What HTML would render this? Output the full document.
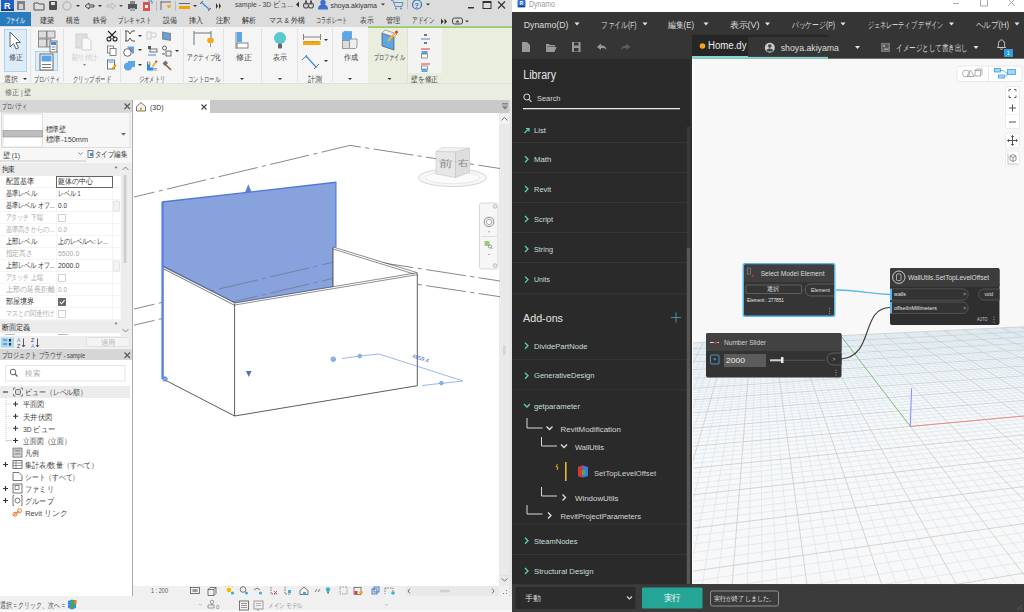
<!DOCTYPE html>
<html><head><meta charset="utf-8">
<style>
html,body{margin:0;padding:0;width:1024px;height:612px;overflow:hidden;background:#fff}
svg{display:block}
text{font-family:"Liberation Sans",sans-serif;white-space:pre}
</style></head><body>
<svg width="1024" height="612" viewBox="0 0 1024 612">
<rect x="0" y="0" width="512" height="612" fill="#f0f0f0"/>
<rect x="0" y="0" width="512" height="27" fill="#dcdcdc"/>
<g>
<rect x="1" y="0" width="13" height="11" fill="#1f5fc8"/><rect x="1" y="9" width="13" height="2" fill="#143f8a"/>
<text x="4" y="9" font-size="9" font-weight="bold" fill="#fff">R</text>
<rect x="17" y="1" width="8" height="9" fill="#7d8288"/><rect x="19" y="4" width="4" height="5" fill="#cfd3d6"/>
<path d="M34 3h4l1 1h5v6h-10z" fill="none" stroke="#555" stroke-width="1"/>
<rect x="49" y="1" width="8" height="9" rx="1" fill="#505050"/><rect x="51" y="2" width="4" height="3" fill="#ddd"/>
<circle cx="67" cy="6" r="4" fill="none" stroke="#bbb" stroke-width="1.5"/>
<path d="M76 5l2 2l2-2z" fill="#333"/>
<path d="M85 6l4-3v2h5v2h-5v2z" fill="none" stroke="#444" stroke-width="1"/>
<path d="M98 5l2 2l2-2z" fill="#333"/>
<path d="M116 6l-4-3v2h-5v2h5v2z" fill="none" stroke="#bbb" stroke-width="1"/>
<path d="M119 5l2 2l2-2z" fill="#555"/>
<rect x="128" y="4" width="9" height="5" fill="#555"/><rect x="130" y="1" width="5" height="3" fill="#888"/><rect x="130" y="8" width="5" height="3" fill="#9ab"/>
<rect x="143" y="2" width="7" height="9" fill="#d9534f"/><rect x="145" y="5" width="3" height="3" fill="#fff"/><path d="M148 1h4v3" stroke="#3a8ee6" fill="none"/>
<rect x="156" y="1" width="1" height="10" fill="#bbb"/>
<path d="M161 1v9M161 2h10" stroke="#666" fill="none"/><path d="M167 5h4l-1 3h-2z" fill="#f5a623"/>
<rect x="175" y="1" width="1" height="10" fill="#bbb"/>
<rect x="179" y="3" width="11" height="1" fill="#666"/><rect x="179" y="6" width="11" height="3" fill="#f0a30a"/>
<path d="M193 5l2 2l2-2z" fill="#333"/>
<path d="M201 2l9 8" stroke="#3a8ee6" stroke-width="1.3"/><path d="M200 4l3-3M208 11l3-3" stroke="#666"/>
<path d="M216 3l2 3l-2 3zM219 3l2 3l-2 3z" fill="#333"/>
<g transform="translate(0,-1.5)"><path d="M299 3v6l-3-3z" fill="#333"/>
<circle cx="306" cy="7" r="2.5" fill="none" stroke="#555" stroke-width="1.2"/><circle cx="311" cy="7" r="2.5" fill="none" stroke="#555" stroke-width="1.2"/><rect x="305" y="2" width="2" height="4" fill="#555"/><rect x="310" y="2" width="2" height="4" fill="#555"/>
<circle cx="323" cy="4" r="2.7" fill="#3c6fd0"/><path d="M318 11c0-4 2-5 5-5s5 1 5 5z" fill="#3c6fd0"/>
<path d="M381 5l2 2l2-2z" fill="#333"/>
<path d="M391 2h2l2 6h7l1-4h-9" fill="none" stroke="#5a8fc0" stroke-width="1"/><circle cx="396" cy="10" r="1" fill="#5a8fc0"/><circle cx="401" cy="10" r="1" fill="#5a8fc0"/>
<rect x="407" y="1" width="1" height="10" fill="#bbb"/>
<circle cx="417" cy="6" r="4.5" fill="none" stroke="#2f6fc0" stroke-width="1.2"/><text x="414.5" y="9" font-size="7" font-weight="bold" fill="#2f6fc0">?</text>
<path d="M426 5l2 2l2-2z" fill="#333"/></g>
<rect x="468" y="7" width="6" height="1.5" fill="#333"/>
<rect x="483" y="1.5" width="8" height="7" fill="none" stroke="#333" stroke-width="1"/><rect x="483" y="1.5" width="8" height="1.5" fill="#333"/>
<path d="M498 1.5l7 7M505 1.5l-7 7" stroke="#333" stroke-width="1.2"/>
</g>
<text x="235" y="6.7" font-size="7.5" fill="#444" textLength="58" lengthAdjust="spacingAndGlyphs">sample - 3D ビュ...</text>
<text x="330.5" y="7.5" font-size="7.5" fill="#333" textLength="46.5" lengthAdjust="spacingAndGlyphs">shoya.akiyama</text>
<rect x="0" y="12" width="31" height="14" fill="#2a7bbd"/>
<text x="5.5" y="22.7" font-size="7.5" fill="#fff" textLength="19.5" lengthAdjust="spacingAndGlyphs">ファイル</text>
<text x="39.5" y="22.7" font-size="7.5" fill="#333" textLength="14.5" lengthAdjust="spacingAndGlyphs">建築</text>
<text x="66" y="22.7" font-size="7.5" fill="#333" textLength="14" lengthAdjust="spacingAndGlyphs">構造</text>
<text x="92.5" y="22.7" font-size="7.5" fill="#333" textLength="14.0" lengthAdjust="spacingAndGlyphs">鉄骨</text>
<text x="118" y="22.7" font-size="7.5" fill="#333" textLength="33" lengthAdjust="spacingAndGlyphs">プレキャスト</text>
<text x="163" y="22.7" font-size="7.5" fill="#333" textLength="14" lengthAdjust="spacingAndGlyphs">設備</text>
<text x="189" y="22.7" font-size="7.5" fill="#333" textLength="14" lengthAdjust="spacingAndGlyphs">挿入</text>
<text x="215.5" y="22.7" font-size="7.5" fill="#333" textLength="14.5" lengthAdjust="spacingAndGlyphs">注釈</text>
<text x="242" y="22.7" font-size="7.5" fill="#333" textLength="14" lengthAdjust="spacingAndGlyphs">解析</text>
<text x="268.5" y="22.7" font-size="7.5" fill="#333" textLength="36.5" lengthAdjust="spacingAndGlyphs">マス &amp; 外構</text>
<text x="316" y="22.7" font-size="7.5" fill="#333" textLength="31" lengthAdjust="spacingAndGlyphs">コラボレート</text>
<text x="360" y="22.7" font-size="7.5" fill="#333" textLength="13.5" lengthAdjust="spacingAndGlyphs">表示</text>
<text x="386" y="22.7" font-size="7.5" fill="#333" textLength="14.5" lengthAdjust="spacingAndGlyphs">管理</text>
<text x="412" y="22.7" font-size="7.5" fill="#333" textLength="22" lengthAdjust="spacingAndGlyphs">アドイン</text>
<g transform="translate(440,16.5)">
<path d="M1 2l2.5 3l-2.5 3zM4.5 2l2.5 3l-2.5 3z" fill="#333"/>
<rect x="12.5" y="1.5" width="10" height="6" rx="2" fill="none" stroke="#444" stroke-width="1"/><path d="M15.5 6l2-2.5l2 2.5z" fill="#444"/>
<path d="M25 4l2 2l2-2z" fill="#444"/></g>
<rect x="0" y="27" width="512" height="56" fill="#f5f5f5"/>
<rect x="368" y="26.3" width="144" height="1.6" fill="#92c65e"/>
<rect x="368" y="28" width="144" height="55" fill="#e9eedf"/>
<rect x="408" y="28" width="34" height="45" fill="#f3f3f1"/>
<rect x="0" y="83" width="512" height="1" fill="#dfe3d6"/>
<rect x="30" y="29" width="1" height="53" fill="#e2e2e2"/>
<rect x="63" y="29" width="1" height="53" fill="#e2e2e2"/>
<rect x="120" y="29" width="1" height="53" fill="#e2e2e2"/>
<rect x="183" y="29" width="1" height="53" fill="#e2e2e2"/>
<rect x="223" y="29" width="1" height="53" fill="#e2e2e2"/>
<rect x="261" y="29" width="1" height="53" fill="#e2e2e2"/>
<rect x="297" y="29" width="1" height="53" fill="#e2e2e2"/>
<rect x="332" y="29" width="1" height="53" fill="#e2e2e2"/>
<rect x="407" y="29" width="1" height="53" fill="#dde2d3"/>
<rect x="4.5" y="29.5" width="22" height="42" fill="#dcecf8" stroke="#a9d5f2" stroke-width="1"/>
<rect x="35.5" y="51.5" width="22" height="19" fill="#dcecf8" stroke="#a9d5f2" stroke-width="1"/>
<g transform="translate(0,27)">
<path d="M10 5v15l3.5-3.5l2.5 5.5l2.5-1l-2.5-5.5h4.5z" fill="#fff" stroke="#555" stroke-width="0.9"/>
<rect x="38.5" y="4" width="8" height="7" fill="#ddd" stroke="#777" stroke-width=".8"/><rect x="47" y="4" width="8" height="7" fill="#ddd" stroke="#777" stroke-width=".8"/>
<rect x="38.5" y="12" width="8" height="8" fill="#ddd" stroke="#777" stroke-width=".8"/><rect x="47" y="12" width="4" height="8" fill="#ddd" stroke="#777" stroke-width=".8"/>
<rect x="50" y="14" width="7" height="11" fill="#fff" stroke="#555" stroke-width=".8"/><rect x="51" y="15" width="5" height="3" fill="#3a8ee6"/><path d="M51.5 20h4M51.5 22.5h4" stroke="#555" stroke-width=".7"/>
<rect x="40" y="27" width="13" height="16" fill="#fff" stroke="#555" stroke-width=".9"/><rect x="41.5" y="28.5" width="10" height="6" fill="#5aa6e8"/><path d="M42 37.5h9M42 40.5h9" stroke="#555" stroke-width=".8"/>
<rect x="76" y="7" width="11" height="14" fill="#e0e0e0" stroke="#d0d0d0"/><path d="M82 11h6l3 3v9h-9z" fill="#fafafa" stroke="#cfcfcf"/>
<path d="M83 37l1.5 2l1.5-2z" fill="#888"/>
<circle cx="109" cy="12" r="2" fill="none" stroke="#222" stroke-width="1.1"/><circle cx="115" cy="12" r="2" fill="none" stroke="#222" stroke-width="1.1"/><path d="M108 4l7 7M116 4l-7 7" stroke="#222" stroke-width="1.1"/>
<rect x="107.5" y="19" width="6" height="7" fill="#fff" stroke="#666" stroke-width=".8"/><rect x="110" y="21.5" width="6" height="7" fill="#fff" stroke="#666" stroke-width=".8"/>
<rect x="107.5" y="33" width="7" height="9" fill="#fff" stroke="#555" stroke-width=".8"/><path d="M108.5 35h5" stroke="#3a8ee6"/><path d="M112 42l4-4" stroke="#f0a30a" stroke-width="2"/>
<path d="M125 4h3l2 3l2-3h3M125 14h3l2-3l2 3h3M126 4v10" stroke="#555" fill="none" stroke-width="1"/>
<path d="M138 8l2 2l2-2z" fill="#333"/>
<rect x="147" y="5" width="4" height="7" fill="none" stroke="#ccc"/><path d="M151 6h5v4h-5" fill="none" stroke="#ccc"/>
<path d="M162 4.5l9 1.5v8l-9-1.5z" fill="#8a8a8a"/><path d="M163.3 6.3l6.4 1v5l-6.4-1z" fill="#5aa6e8"/>
<circle cx="127.5" cy="25.5" r="3.8" fill="#fff" stroke="#555" stroke-width=".9"/><path d="M127 19.5h7v7h-2" fill="#5aa6e8"/><path d="M129 21.5a4 4 0 0 1 2.5 3" stroke="#d33" fill="none"/>
<path d="M138 22l2 2l2-2z" fill="#333"/>
<rect x="148" y="19" width="3" height="3" fill="#555"/><rect x="150" y="22" width="7" height="3" fill="none" stroke="#555" stroke-width=".8"/><path d="M148 28h8" stroke="#3a8ee6"/>
<circle cx="164.5" cy="21" r="2" fill="none" stroke="#555" stroke-width=".9"/><rect x="166" y="24" width="5" height="5" fill="#eee" stroke="#555" stroke-width=".8"/><path d="M162 27h3" stroke="#555"/>
<path d="M175 23l2 2l2-2z" fill="#333"/>
<circle cx="128" cy="39.5" r="4" fill="#5aa6e8"/><rect x="128" y="34" width="7" height="6" fill="#5aa6e8"/>
<path d="M138 37l2 2l2-2z" fill="#333"/>
<path d="M147 34.5h1.2v7h-1.2zM149.5 34.5h0.8v4h-0.8z" fill="#777"/><path d="M147 37.5h3v3h3.5v3h-6.5z" fill="#2f8ae6"/><path d="M152.5 39.5l3.5-4.5" stroke="#f0b53a" stroke-width="2"/><circle cx="156.3" cy="34.6" r="1.1" fill="#e33"/><path d="M154 41.5h3M154 43h3" stroke="#666" stroke-width=".6"/>
<path d="M165.5 37.5l5.5 5.5" stroke="#8a5a4a" stroke-width="1.6"/><path d="M162.5 36.5l3-3l2.5 2.5l-3 3z" fill="#707070"/>
<path d="M194 4v14M211 4v9M194 6h17" stroke="#666" fill="none" stroke-width=".9"/><path d="M207 13h7l-1 3h-5z" fill="#f5a623"/><rect x="207.5" y="11" width="6" height="2" fill="#f5a623"/><path d="M210.5 16v4" stroke="#999"/>
<rect x="235.5" y="5" width="1" height="17" fill="#888"/><rect x="237" y="5" width="5" height="10" fill="#5aa6e8"/><rect x="237" y="16" width="11" height="5" fill="#fff" stroke="#666" stroke-width=".8"/>
<circle cx="280" cy="11" r="6" fill="#5bc7d0"/><rect x="278" y="16.5" width="4" height="5" rx="1" fill="#666"/>
<path d="M303.5 7v6M320.5 7v6M304 10h16" stroke="#666" stroke-width=".8"/><rect x="303" y="14" width="17.5" height="4" fill="#f5a814"/><path d="M305 14v1.5M307.5 14v1.5M310 14v1.5M312.5 14v1.5M315 14v1.5M317.5 14v1.5" stroke="#a86a00" stroke-width=".5"/>
<path d="M324 12l2 2l2-2z" fill="#333"/>
<path d="M302 33l5-5M314 42l5-5" stroke="#555" stroke-width=".8"/><path d="M306 29l10 11" stroke="#3a8ee6" stroke-width="1.2"/><circle cx="306" cy="29.5" r="1" fill="#3a8ee6"/><circle cx="316" cy="40" r="1" fill="#3a8ee6"/>
<path d="M324 33l2 2l2-2z" fill="#333"/>
<path d="M342.5 6l1.5-1.5h7.5v7.5l-1.5 1.5h-7.5z" fill="#5aa6e8" stroke="#3a86c8" stroke-width=".5"/><rect x="342.5" y="13.5" width="7" height="8" fill="#ddd" stroke="#888" stroke-width=".8"/><path d="M349.5 13.5l1.5-1.5h6v8l-1.5 1.5h-6z" fill="#eee" stroke="#888" stroke-width=".8"/>
<path d="M382 6l12 4v13l-12-4z" fill="#5aa6e8" stroke="#555" stroke-width=".7"/><path d="M382 6l3-3l12 4l-3 3z" fill="#eee" stroke="#777" stroke-width=".6"/><path d="M388 14l7-8" stroke="#f0b53a" stroke-width="2"/><circle cx="396.5" cy="5" r="1.5" fill="#e33"/>
<rect x="424" y="7" width="3" height="2" fill="#777"/><path d="M421 12h9" stroke="#3a8ee6"/><rect x="424" y="15" width="3" height="2" fill="#777"/>
<path d="M421 22h9" stroke="#e34" stroke-width="1"/><rect x="421.5" y="24" width="6" height="3" fill="#5aa6e8"/><rect x="421.5" y="27" width="6" height="4" fill="#fff" stroke="#555" stroke-width=".6"/>
<path d="M421 37h9" stroke="#e34" stroke-width="1"/><rect x="421.5" y="39" width="6" height="3" fill="#fff" stroke="#555" stroke-width=".6"/><rect x="421.5" y="42" width="6" height="3" fill="#5aa6e8"/>
<path d="M23 51l2 2l2-2z" fill="#333"/>
<path d="M240 51l2 2l2-2z" fill="#333"/>
<path d="M278 51l2 2l2-2z" fill="#333"/>
<path d="M348 51l2 2l2-2z" fill="#333"/>
<path d="M387.5 51l2 2l2-2z" fill="#333"/>
</g>
<text x="8.5" y="60.2" font-size="7.5" fill="#444" textLength="14.0" lengthAdjust="spacingAndGlyphs">修正</text>
<text x="72" y="60.2" font-size="7.5" fill="#c8c8c8" textLength="25" lengthAdjust="spacingAndGlyphs">貼り付け</text>
<text x="187" y="60.2" font-size="7.5" fill="#444" textLength="34" lengthAdjust="spacingAndGlyphs">アクティブ化</text>
<text x="236" y="60.2" font-size="7.5" fill="#444" textLength="16" lengthAdjust="spacingAndGlyphs">修正</text>
<text x="272.8" y="60.2" font-size="7.5" fill="#444" textLength="14.0" lengthAdjust="spacingAndGlyphs">表示</text>
<text x="344" y="60.2" font-size="7.5" fill="#444" textLength="14" lengthAdjust="spacingAndGlyphs">作成</text>
<text x="373.5" y="60.2" font-size="7.5" fill="#444" textLength="31.2" lengthAdjust="spacingAndGlyphs">プロファイル</text>
<text x="4" y="82.2" font-size="7.5" fill="#444" textLength="14" lengthAdjust="spacingAndGlyphs">選択</text>
<text x="34" y="82.2" font-size="7.5" fill="#444" textLength="26" lengthAdjust="spacingAndGlyphs">プロパティ</text>
<text x="73" y="82.2" font-size="7.5" fill="#444" textLength="38" lengthAdjust="spacingAndGlyphs">クリップボード</text>
<text x="139" y="82.2" font-size="7.5" fill="#444" textLength="26" lengthAdjust="spacingAndGlyphs">ジオメトリ</text>
<text x="188" y="82.2" font-size="7.5" fill="#444" textLength="32" lengthAdjust="spacingAndGlyphs">コントロール</text>
<text x="308" y="82.2" font-size="7.5" fill="#444" textLength="14" lengthAdjust="spacingAndGlyphs">計測</text>
<text x="411" y="82.2" font-size="7.5" fill="#444" textLength="27" lengthAdjust="spacingAndGlyphs">壁を修正</text>
<rect x="0" y="84" width="512" height="16" fill="#eaeee2"/>
<text x="5" y="95.2" font-size="7.5" fill="#666" textLength="26.5" lengthAdjust="spacingAndGlyphs">修正 | 壁</text>
<rect x="0" y="100" width="132" height="12" fill="#d6d6d6"/>
<text x="1.5" y="109.2" font-size="7.5" fill="#444" textLength="25.5" lengthAdjust="spacingAndGlyphs">プロパティ</text>
<path d="M124.5 103.5l5.5 5.5M130 103.5l-5.5 5.5" stroke="#555" stroke-width="1.1"/>
<rect x="0" y="112" width="132" height="238" fill="#f7f7f7"/>
<rect x="1.5" y="112.5" width="128.5" height="35" fill="#f7f7f7" stroke="#dcdcdc" stroke-width="1"/>
<rect x="3" y="114" width="39.5" height="33" fill="#ffffff" stroke="#d8d8d8" stroke-width="0.8"/>
<rect x="3" y="130.5" width="39.5" height="6.5" fill="#bdbdbd" stroke="#8f8f8f" stroke-width="0.6"/>
<text x="45.5" y="132.0" font-size="7.5" fill="#444" textLength="20.5" lengthAdjust="spacingAndGlyphs">標準壁</text>
<text x="45.5" y="142.0" font-size="7.5" fill="#444" textLength="42.5" lengthAdjust="spacingAndGlyphs">標準-150mm</text>
<path d="M121 133l2.5 2.5l2.5-2.5z" fill="#666"/>
<text x="2.5" y="157.5" font-size="7.5" fill="#444" textLength="17.5" lengthAdjust="spacingAndGlyphs">壁 (1)</text>
<path d="M78.5 152.5l2 2l2-2" stroke="#777" fill="none" stroke-width=".9"/>
<rect x="0" y="160.5" width="86" height="1" fill="#c8c8c8"/>
<rect x="88" y="150.5" width="5" height="7" fill="none" stroke="#666" stroke-width=".8"/><rect x="90" y="153" width="3" height="3" fill="#3a8ee6"/>
<text x="94.5" y="156.9" font-size="7.5" fill="#444" textLength="32.5" lengthAdjust="spacingAndGlyphs">タイプ編集</text>
<rect x="120.5" y="163" width="11.5" height="173" fill="#ededed"/>
<path d="M122.5 170l3-3l3 3" stroke="#777" fill="none" stroke-width=".9"/>
<rect x="123.5" y="175" width="3" height="88" fill="#cfcfcf"/>
<path d="M122.5 329l3 3l3-3" stroke="#777" fill="none" stroke-width=".9"/>
<rect x="0" y="163" width="120.5" height="13" fill="#ececec"/>
<text x="1.5" y="172.3" font-size="7.5" fill="#333" textLength="13.5" lengthAdjust="spacingAndGlyphs">拘束</text>
<text x="114.5" y="171.02" font-size="7" fill="#555">*</text>
<rect x="0" y="176" width="120.5" height="12" fill="#ffffff"/>
<rect x="0" y="187.5" width="120.5" height="0.6" fill="#ececec"/>
<rect x="56.5" y="176" width="0.6" height="12" fill="#ececec"/>
<rect x="112.5" y="176" width="0.6" height="12" fill="#ececec"/>
<text x="5.5" y="184.1" font-size="7.5" fill="#333333" textLength="28.25" lengthAdjust="spacingAndGlyphs">配置基準</text>
<text x="58" y="184.1" font-size="7.5" fill="#333333" textLength="34.5" lengthAdjust="spacingAndGlyphs">躯体の中心</text>
<rect x="56.5" y="176.5" width="56" height="11" fill="none" stroke="#555" stroke-width="0.9"/>
<rect x="0" y="188" width="120.5" height="12" fill="#ffffff"/>
<rect x="0" y="199.5" width="120.5" height="0.6" fill="#ececec"/>
<rect x="56.5" y="188" width="0.6" height="12" fill="#ececec"/>
<rect x="112.5" y="188" width="0.6" height="12" fill="#ececec"/>
<text x="5.5" y="196.1" font-size="7.5" fill="#333333" textLength="31.25" lengthAdjust="spacingAndGlyphs">基準レベル</text>
<text x="58" y="196.1" font-size="7.5" fill="#333333" textLength="22.5" lengthAdjust="spacingAndGlyphs">レベル 1</text>
<rect x="0" y="200" width="120.5" height="12" fill="#ffffff"/>
<rect x="0" y="211.5" width="120.5" height="0.6" fill="#ececec"/>
<rect x="56.5" y="200" width="0.6" height="12" fill="#ececec"/>
<rect x="112.5" y="200" width="0.6" height="12" fill="#ececec"/>
<text x="5.5" y="208.1" font-size="7.5" fill="#333333" textLength="49.0" lengthAdjust="spacingAndGlyphs">基準レベル オフ...</text>
<text x="58" y="208.1" font-size="7.5" fill="#333333" textLength="9" lengthAdjust="spacingAndGlyphs">0.0</text>
<rect x="113.5" y="201" width="6" height="10" fill="#f4f4f4" stroke="#d8d8d8" stroke-width="0.7" rx="1"/>
<rect x="0" y="212" width="120.5" height="12" fill="#ffffff"/>
<rect x="0" y="223.5" width="120.5" height="0.6" fill="#ececec"/>
<rect x="56.5" y="212" width="0.6" height="12" fill="#ececec"/>
<rect x="112.5" y="212" width="0.6" height="12" fill="#ececec"/>
<text x="5.5" y="220.1" font-size="7.5" fill="#aaaaaa" textLength="37.5" lengthAdjust="spacingAndGlyphs">アタッチ 下端</text>
<rect x="58.5" y="214.5" width="7" height="7" fill="#fff" stroke="#c8c8c8" stroke-width="0.8"/>
<rect x="0" y="224" width="120.5" height="12" fill="#ffffff"/>
<rect x="0" y="235.5" width="120.5" height="0.6" fill="#ececec"/>
<rect x="56.5" y="224" width="0.6" height="12" fill="#ececec"/>
<rect x="112.5" y="224" width="0.6" height="12" fill="#ececec"/>
<text x="5.5" y="232.1" font-size="7.5" fill="#aaaaaa" textLength="49.0" lengthAdjust="spacingAndGlyphs">基準高さからの...</text>
<text x="58" y="232.1" font-size="7.5" fill="#aaaaaa" textLength="9" lengthAdjust="spacingAndGlyphs">0.0</text>
<rect x="0" y="236" width="120.5" height="12" fill="#ffffff"/>
<rect x="0" y="247.5" width="120.5" height="0.6" fill="#ececec"/>
<rect x="56.5" y="236" width="0.6" height="12" fill="#ececec"/>
<rect x="112.5" y="236" width="0.6" height="12" fill="#ececec"/>
<text x="5.5" y="244.1" font-size="7.5" fill="#333333" textLength="31.25" lengthAdjust="spacingAndGlyphs">上部レベル</text>
<text x="58" y="244.1" font-size="7.5" fill="#333333" textLength="50" lengthAdjust="spacingAndGlyphs">上のレベルへ: レ...</text>
<rect x="0" y="248" width="120.5" height="12" fill="#ffffff"/>
<rect x="0" y="259.5" width="120.5" height="0.6" fill="#ececec"/>
<rect x="56.5" y="248" width="0.6" height="12" fill="#ececec"/>
<rect x="112.5" y="248" width="0.6" height="12" fill="#ececec"/>
<text x="5.5" y="256.1" font-size="7.5" fill="#aaaaaa" textLength="27.0" lengthAdjust="spacingAndGlyphs">指定高さ</text>
<text x="58" y="256.1" font-size="7.5" fill="#aaaaaa" textLength="21.25" lengthAdjust="spacingAndGlyphs">5500.0</text>
<rect x="0" y="260" width="120.5" height="12" fill="#ffffff"/>
<rect x="0" y="271.5" width="120.5" height="0.6" fill="#ececec"/>
<rect x="56.5" y="260" width="0.6" height="12" fill="#ececec"/>
<rect x="112.5" y="260" width="0.6" height="12" fill="#ececec"/>
<text x="5.5" y="268.1" font-size="7.5" fill="#333333" textLength="49.0" lengthAdjust="spacingAndGlyphs">上部レベル オフ...</text>
<text x="58" y="268.1" font-size="7.5" fill="#333333" textLength="21.25" lengthAdjust="spacingAndGlyphs">2000.0</text>
<rect x="113.5" y="261" width="6" height="10" fill="#f4f4f4" stroke="#d8d8d8" stroke-width="0.7" rx="1"/>
<rect x="0" y="272" width="120.5" height="12" fill="#ffffff"/>
<rect x="0" y="283.5" width="120.5" height="0.6" fill="#ececec"/>
<rect x="56.5" y="272" width="0.6" height="12" fill="#ececec"/>
<rect x="112.5" y="272" width="0.6" height="12" fill="#ececec"/>
<text x="5.5" y="280.1" font-size="7.5" fill="#aaaaaa" textLength="37.5" lengthAdjust="spacingAndGlyphs">アタッチ 上端</text>
<rect x="58.5" y="274.5" width="7" height="7" fill="#fff" stroke="#c8c8c8" stroke-width="0.8"/>
<rect x="0" y="284" width="120.5" height="12" fill="#ffffff"/>
<rect x="0" y="295.5" width="120.5" height="0.6" fill="#ececec"/>
<rect x="56.5" y="284" width="0.6" height="12" fill="#ececec"/>
<rect x="112.5" y="284" width="0.6" height="12" fill="#ececec"/>
<text x="5.5" y="292.1" font-size="7.5" fill="#aaaaaa" textLength="49.0" lengthAdjust="spacingAndGlyphs">上部の延長距離</text>
<text x="58" y="292.1" font-size="7.5" fill="#aaaaaa" textLength="9" lengthAdjust="spacingAndGlyphs">0.0</text>
<rect x="0" y="296" width="120.5" height="12" fill="#ffffff"/>
<rect x="0" y="307.5" width="120.5" height="0.6" fill="#ececec"/>
<rect x="56.5" y="296" width="0.6" height="12" fill="#ececec"/>
<rect x="112.5" y="296" width="0.6" height="12" fill="#ececec"/>
<text x="5.5" y="304.1" font-size="7.5" fill="#333333" textLength="28.25" lengthAdjust="spacingAndGlyphs">部屋境界</text>
<rect x="58.5" y="298.5" width="7" height="7" fill="#666" stroke="#555" stroke-width="0.8"/>
<path d="M59.8 302l1.8 1.8l3-3.6" stroke="#fff" fill="none" stroke-width="1.1"/>
<rect x="0" y="308" width="120.5" height="12" fill="#ffffff"/>
<rect x="0" y="319.5" width="120.5" height="0.6" fill="#ececec"/>
<rect x="56.5" y="308" width="0.6" height="12" fill="#ececec"/>
<rect x="112.5" y="308" width="0.6" height="12" fill="#ececec"/>
<text x="5.5" y="316.1" font-size="7.5" fill="#aaaaaa" textLength="49.0" lengthAdjust="spacingAndGlyphs">マスとの関連付け</text>
<rect x="58.5" y="310.5" width="7" height="7" fill="#fff" stroke="#c8c8c8" stroke-width="0.8"/>
<rect x="0" y="320.5" width="120.5" height="12.5" fill="#ececec"/>
<text x="1.5" y="330.0" font-size="7.5" fill="#333" textLength="28.5" lengthAdjust="spacingAndGlyphs">断面定義</text>
<text x="114.5" y="327.02" font-size="7" fill="#555">*</text>
<rect x="0" y="333" width="120.5" height="3" fill="#fff"/>
<rect x="5" y="334" width="10" height="1" fill="#bbb"/>
<rect x="58" y="334" width="10" height="1" fill="#bbb"/>
<rect x="0" y="336" width="132" height="12.5" fill="#eeeeee"/>
<rect x="1" y="337.5" width="13" height="10" fill="#a6d8f2"/>
<path d="M3 340h4M3 344h4" stroke="#2a6fa8" stroke-width="1"/><rect x="9" y="339" width="2" height="2.5" fill="#333"/><rect x="9" y="343" width="2" height="2.5" fill="#333"/>
<text x="17" y="342" font-size="5" fill="#3a8ee6">A</text><text x="17" y="347.5" font-size="5" fill="#333">Z</text><path d="M23.5 338.5v8M22 345l1.5 2l1.5-2" stroke="#333" fill="none" stroke-width=".8"/>
<text x="31" y="342" font-size="5" fill="#333">Z</text><text x="31" y="347.5" font-size="5" fill="#3a8ee6">A</text><path d="M37.5 338.5v8M36 345l1.5 2l1.5-2" stroke="#333" fill="none" stroke-width=".8"/>
<rect x="86.5" y="337.5" width="43" height="9" fill="#f3f3f3" stroke="#dddddd" stroke-width="0.8" rx="1"/>
<text x="100.5" y="344.52" font-size="7" fill="#b5b5b5" textLength="14.5" lengthAdjust="spacingAndGlyphs">適用</text>
<rect x="132" y="100" width="1" height="496" fill="#a9a9a9"/>
<rect x="0" y="349" width="132" height="11" fill="#d6d6d6"/>
<text x="1.5" y="357.7" font-size="7.5" fill="#444" textLength="83.5" lengthAdjust="spacingAndGlyphs">プロジェクト ブラウザ - sample</text>
<path d="M124.5 352.5l5.5 5.5M130 352.5l-5.5 5.5" stroke="#555" stroke-width="1.1"/>
<rect x="0" y="360" width="132" height="236" fill="#ffffff"/>
<rect x="5.5" y="365.5" width="119.5" height="15.5" fill="#fff" stroke="#dedede" stroke-width="0.8"/>
<circle cx="13" cy="372" r="2.8" fill="none" stroke="#666" stroke-width="1"/><path d="M15 374l2.5 2.5" stroke="#666" stroke-width="1.2"/>
<text x="25" y="375.7" font-size="7.5" fill="#b0b0b0" textLength="15" lengthAdjust="spacingAndGlyphs">検索</text>
<rect x="0" y="386" width="130" height="12" fill="#ececec"/>
<path d="M3 392h5" stroke="#333" stroke-width="1.1"/>
<path d="M13.5 390v-2h2M20.5 388h2v2M22.5 394v2h-2M15.5 396h-2v-2" stroke="#666" fill="none" stroke-width=".8"/><rect x="15.5" y="389.5" width="5" height="5" rx="1.2" fill="#ddd" stroke="#555" stroke-width=".8"/>
<text x="25.2" y="395.3" font-size="7.5" fill="#444" textLength="61.8" lengthAdjust="spacingAndGlyphs">ビュー（レベル順）</text>
<path d="M6 398v43h6" stroke="#aaa" stroke-width=".6" stroke-dasharray="1 1" fill="none"/>
<path d="M6 404h6" stroke="#aaa" stroke-width=".6" stroke-dasharray="1 1"/>
<path d="M13 404h5M15.5 401.5v5" stroke="#333" stroke-width="1.1"/>
<text x="23" y="407.3" font-size="7.5" fill="#444" textLength="21.5" lengthAdjust="spacingAndGlyphs">平面図</text>
<path d="M6 416.2h6" stroke="#aaa" stroke-width=".6" stroke-dasharray="1 1"/>
<path d="M13 416.2h5M15.5 413.7v5" stroke="#333" stroke-width="1.1"/>
<text x="23" y="419.5" font-size="7.5" fill="#444" textLength="29" lengthAdjust="spacingAndGlyphs">天井伏図</text>
<path d="M6 428.2h6" stroke="#aaa" stroke-width=".6" stroke-dasharray="1 1"/>
<path d="M13 428.2h5M15.5 425.7v5" stroke="#333" stroke-width="1.1"/>
<text x="23" y="431.5" font-size="7.5" fill="#444" textLength="32" lengthAdjust="spacingAndGlyphs">3D ビュー</text>
<path d="M6 440.5h6" stroke="#aaa" stroke-width=".6" stroke-dasharray="1 1"/>
<path d="M13 440.5h5M15.5 438.0v5" stroke="#333" stroke-width="1.1"/>
<text x="23" y="443.8" font-size="7.5" fill="#444" textLength="48" lengthAdjust="spacingAndGlyphs">立面図（立面）</text>
<rect x="13" y="448.1" width="9" height="9" fill="#ddd" stroke="#666" stroke-width=".8"/><rect x="14.5" y="449.6" width="6" height="2" fill="#999"/><rect x="14.5" y="452.6" width="6" height="2.5" fill="#aaa"/>
<text x="25.2" y="455.9" font-size="7.5" fill="#444" textLength="13.7" lengthAdjust="spacingAndGlyphs">凡例</text>
<path d="M3 464.5h5M5.5 462.0v5" stroke="#333" stroke-width="1.1"/>
<rect x="13" y="460.5" width="9" height="8" fill="#fff" stroke="#555" stroke-width=".8"/><path d="M13 463.0h9M13 465.5h9M16 460.5v8" stroke="#555" stroke-width=".6"/>
<text x="25.2" y="467.8" font-size="7.5" fill="#444" textLength="73.2" lengthAdjust="spacingAndGlyphs">集計表/数量（すべて）</text>
<path d="M13 472.5h6l3 3v5h-9z" fill="#fff" stroke="#555" stroke-width=".8"/>
<text x="25.2" y="479.8" font-size="7.5" fill="#444" textLength="53.8" lengthAdjust="spacingAndGlyphs">シート（すべて）</text>
<path d="M3 488.5h5M5.5 486.0v5" stroke="#333" stroke-width="1.1"/>
<rect x="13" y="484.0" width="9" height="9" fill="#fff" stroke="#555" stroke-width=".8"/><rect x="15" y="485.5" width="4" height="4" fill="none" stroke="#555" stroke-width=".7"/>
<text x="25.2" y="491.8" font-size="7.5" fill="#444" textLength="28.6" lengthAdjust="spacingAndGlyphs">ファミリ</text>
<path d="M3 500.5h5M5.5 498.0v5" stroke="#333" stroke-width="1.1"/>
<path d="M14 495.5h-1v10h1M21 495.5h1v10h-1" stroke="#555" fill="none" stroke-width=".8"/><circle cx="17.5" cy="500.5" r="2.5" fill="none" stroke="#555" stroke-width=".8"/>
<text x="25.2" y="503.8" font-size="7.5" fill="#444" textLength="28.6" lengthAdjust="spacingAndGlyphs">グループ</text>
<path d="M13.5 515.7l3-3M16.5 513.7l3-3" stroke="#f07a3a" stroke-width="1.2"/><circle cx="15" cy="514.2" r="2" fill="none" stroke="#f07a3a" stroke-width="1"/><circle cx="19.5" cy="510.70000000000005" r="2" fill="none" stroke="#f07a3a" stroke-width="1"/>
<text x="25.2" y="516.0" font-size="7.5" fill="#444" textLength="42.3" lengthAdjust="spacingAndGlyphs">Revit リンク</text>
<rect x="133" y="100" width="379" height="13" fill="#c9c9c9"/>
<rect x="133" y="100" width="77" height="13" fill="#ffffff"/>
<path d="M136.5 106.5l4.5-4l4.5 4v4.5h-9z" fill="#f2f2f2" stroke="#666" stroke-width=".9"/><rect x="140" y="107.5" width="2" height="3.5" fill="#e0b020"/>
<text x="150" y="110.2" font-size="7.5" fill="#333" textLength="13.5" lengthAdjust="spacingAndGlyphs">(3D)</text>
<path d="M201.5 104.5l5 5M206.5 104.5l-5 5" stroke="#444" stroke-width="1.1"/>
<path d="M502 103.5h6M502 105h6" stroke="#777" stroke-width=".8"/><path d="M502 106.5l3 3l3-3z" fill="#777"/>
<rect x="133" y="113" width="366" height="473" fill="#ffffff"/>
<rect x="499" y="113" width="10.5" height="473" fill="#eaeaea"/>
<rect x="499" y="575.5" width="10.5" height="0.6" fill="#d6d6d6"/>
<rect x="500" y="114" width="9" height="10" fill="#f2f2f2"/>
<path d="M501.5 120.5l3-3l3 3" stroke="#666" fill="none" stroke-width=".9"/>
<path d="M501.5 578.5l3 2.5l3-2.5" stroke="#666" fill="none" stroke-width=".9"/>
<rect x="503" y="345" width="2.5" height="10" fill="#d6d6d6"/>
<rect x="509.5" y="100" width="2.5" height="512" fill="#e4e4e4"/>
<polygon points="162,202 336.3,182.3 336.3,247.5 333,247.5 333,287.3 234.6,303.6 162,267" fill="#87a2de"/>
<polyline points="134,197 350,145.4 500,168.5" fill="none" stroke="#606060" stroke-width=".75" stroke-dasharray="40 4.5 4 4.5" stroke-dashoffset="19"/>
<polyline points="134,309 351,258 500,281" fill="none" stroke="#606060" stroke-width=".75" stroke-dasharray="40 4.5 4 4.5" stroke-dashoffset="19"/>
<polyline points="134,325.2 350.4,274.3 500,296.7" fill="none" stroke="#606060" stroke-width=".75" stroke-dasharray="40 4.5 4 4.5" stroke-dashoffset="19"/>
<polygon points="162,202 336.3,182.3 336.3,247.5 333,247.5 333,287.3 234.6,303.6 162,267" fill="#87a2de" opacity="0.35"/>
<polygon points="162,267 234.6,303.6 234.6,416 165,380" fill="#fff"/>
<polygon points="234.6,303.6 417.3,273.2 417.3,385.7 234.6,416" fill="#fff"/>
<polygon points="333,247.5 417.3,273.2 333,287.3" fill="#fff"/>
<path d="M163,266 L234.6,302.6 M163.5,268.8 L234.6,305.3" stroke="#444" stroke-width=".7" fill="none"/>
<path d="M234.6,303 L417.3,272.7 M234.6,305 L417.3,274.7" stroke="#444" stroke-width=".6" fill="none"/>
<path d="M333,247 L417.3,272.7 M333,249 L414,274" stroke="#444" stroke-width=".6" fill="none"/>
<path d="M333,247.5 V287" stroke="#333" stroke-width=".8"/>
<path d="M234.6,303.6 V416 M417.3,273.2 V385.7 M165,380 L234.6,416 L417.3,385.7" stroke="#333" stroke-width=".8" fill="none"/>
<path d="M162,202 L336.3,182.3" stroke="#4f78d8" stroke-width="1.4"/>
<path d="M162.6,202 V379" stroke="#5a82e0" stroke-width="2.4"/>
<path d="M335.8,182.3 V247.5" stroke="#5a82e0" stroke-width="1.2"/>
<path d="M245,192.5 L248.3,184.3 L251.6,192 z" fill="#5a7fd6"/>
<path d="M246,371 h5.5 l-2.75,6z" fill="#4a6fc6"/>
<circle cx="165" cy="379" r="2.3" fill="#7aa6e8" stroke="#4a74c8" stroke-width=".6"/>
<g stroke="#6f9ae8" stroke-width=".7" fill="none"><path d="M342,358.5 L358,356.3 M362,355.8 L379,354 L462.7,380.8 M422,385.5 L463,381"/></g>
<circle cx="333.3" cy="359.2" r="2.3" fill="#8fb4ec" stroke="#5a82d0" stroke-width=".6"/>
<circle cx="359.8" cy="356.1" r="1.8" fill="#8fb4ec" stroke="#5a82d0" stroke-width=".6"/>
<circle cx="441.4" cy="383.1" r="1.8" fill="#8fb4ec" stroke="#5a82d0" stroke-width=".6"/>
<text x="0" y="0" font-size="5.5" fill="#3a64c8" transform="translate(412,357.5) rotate(18)" textLength="17" lengthAdjust="spacingAndGlyphs">4859.4</text>
<g opacity="0.88">
<ellipse cx="452.5" cy="177.7" rx="34" ry="8.8" fill="#f6f6f6" stroke="#cfcfcf" stroke-width="1"/>
<ellipse cx="452.5" cy="177.7" rx="27" ry="6" fill="#fbfbfb" stroke="#e0e0e0" stroke-width=".8"/>
<path d="M436,151.5 L443,147.5 L469.5,148 L456,152 Z" fill="#f1f1f1" stroke="#c8c8c8" stroke-width=".6"/>
<path d="M436,151.5 L455.5,152 L455.5,177.5 L436,174 Z" fill="#e4e4e4" stroke="#bdbdbd" stroke-width=".6"/>
<path d="M455.5,152 L469.5,148 L469.5,172.5 L455.5,177.5 Z" fill="#dadada" stroke="#bdbdbd" stroke-width=".6"/>
</g>
<text x="438.5" y="167.1" font-size="10" fill="#8a8a8a" textLength="13.5" lengthAdjust="spacingAndGlyphs">前</text>
<text x="457.5" y="165.74" font-size="9" fill="#8a8a8a" textLength="10.5" lengthAdjust="spacingAndGlyphs">右</text>
<g>
<rect x="479.5" y="203" width="18.5" height="66" rx="2" fill="#f6f6f6" stroke="#cfcfcf" stroke-width=".8"/>
<circle cx="495" cy="206.5" r="1.7" fill="none" stroke="#999" stroke-width=".7"/>
<circle cx="489" cy="222" r="4.8" fill="#f0f0f0" stroke="#888" stroke-width=".9"/><circle cx="489" cy="222" r="2.6" fill="#fff" stroke="#888" stroke-width=".7"/>
<path d="M488 231.5l1 1l1-1z" fill="#666"/>
<path d="M481 236.5h16" stroke="#d8d8d8" stroke-width=".8"/>
<rect x="484.5" y="241" width="5" height="5" fill="#9ccc7a"/><circle cx="490" cy="246.5" r="1.6" fill="none" stroke="#777" stroke-width=".7"/><path d="M491 247.5l1.5 1.5" stroke="#777" stroke-width=".7"/>
<path d="M488 254l1 1l1-1z" fill="#666"/>
<circle cx="495" cy="265.5" r="1.7" fill="none" stroke="#999" stroke-width=".7"/>
</g>
<rect x="133" y="586" width="366" height="10" fill="#f0f0f0"/>
<text x="151" y="593.14" font-size="6.5" fill="#555" textLength="17" lengthAdjust="spacingAndGlyphs">1 : 200</text>
<g stroke="#555" stroke-width=".8" fill="none">
<rect x="190.5" y="587.5" width="9" height="6"/><rect x="192.5" y="589" width="5" height="3" fill="#999" stroke="none"/>
<path d="M208 589.5l2-2h6v6l-2 2h-6z M208 589.5h6v6 M214 589.5l2-2"/>
</g>
<circle cx="229" cy="590" r="2.3" fill="#f5b800"/><path d="M226 587l-1-1M232 587l1-1M229 586.5v-1.3" stroke="#f5b800" stroke-width=".7"/><circle cx="232.5" cy="593" r="1.6" fill="#38b5c8"/>
<circle cx="243" cy="589.5" r="2.8" fill="none" stroke="#555" stroke-width=".8"/><circle cx="246.5" cy="593" r="1.6" fill="#38b5c8"/>
<path d="M254 590l3-2l3 2" stroke="#555" fill="none" stroke-width=".8"/><circle cx="260.5" cy="593" r="1.6" fill="#38b5c8"/>
<path d="M271 587v7h6" stroke="#555" fill="none" stroke-width=".8" stroke-dasharray="1.5 1"/><path d="M274 591l3 3M277 591l-3 3" stroke="#e33" stroke-width=".9"/>
<path d="M285 587v7h6" stroke="#555" fill="none" stroke-width=".8" stroke-dasharray="1.5 1"/><rect x="288" y="590" width="3" height="3" fill="#38b5c8"/>
<path d="M300 590.5l4-3.5l4 3.5v4h-8z" fill="none" stroke="#555" stroke-width=".8"/><rect x="303" y="592" width="3" height="2.5" fill="#38b5c8"/>
<path d="M315 592l2-3M318 592l2-3" stroke="#555" stroke-width=".8"/>
<circle cx="328" cy="589.5" r="2.2" fill="#38b5c8"/><rect x="327.3" y="591.5" width="1.5" height="2" fill="#555"/>
<rect x="340" y="587" width="7" height="7" fill="none" stroke="#777" stroke-width=".7" stroke-dasharray="1.5 1"/>
<rect x="354" y="587.5" width="7" height="7" fill="none" stroke="#555" stroke-width=".7"/><rect x="354.5" y="591" width="3" height="3" fill="#e33"/><circle cx="361" cy="592.5" r="1.8" fill="#f5a623"/>
<rect x="372" y="589" width="5" height="5" fill="none" stroke="#3a6fc0" stroke-width=".9"/><rect x="374" y="587" width="5" height="5" fill="none" stroke="#3a6fc0" stroke-width=".9"/>
<path d="M385 588h8v5M385 588v6" stroke="#555" stroke-width=".7" fill="none" stroke-dasharray="1.5 1"/><circle cx="393" cy="593" r="1.8" fill="#38b5c8"/>

<rect x="406" y="586" width="93" height="10" fill="#e9e9e9"/>
<path d="M410 588.5l-2 2.5l2 2.5M492 588.5l2 2.5l-2 2.5" stroke="#666" fill="none" stroke-width=".9"/>
<rect x="440" y="589.8" width="10" height="2.5" fill="#cfcfcf" rx="1"/>
<g fill="#777"><rect x="506" y="590" width="1" height="1"/><rect x="506" y="593" width="1" height="1"/><rect x="503" y="593" width="1" height="1"/></g>
<rect x="0" y="596" width="512" height="16" fill="#f0f0f0"/>
<rect x="0" y="610.5" width="512" height="1.5" fill="#fafafa"/>
<text x="0" y="607.7" font-size="7.5" fill="#444" textLength="65" lengthAdjust="spacingAndGlyphs">選択 = クリック、次へ =</text>
<path d="M68 601l4-1.5l4 1.5v7l-4 1.5l-4-1.5z" fill="#3a8ee6"/><rect x="71" y="600" width="3" height="8" fill="#46a84a"/><rect x="74" y="600" width="2.5" height="4" fill="#e07a30"/>
<path d="M199 604l1.5 1.5l1.5-1.5" stroke="#aaa" fill="none" stroke-width=".7"/>
<circle cx="212" cy="602" r="1.8" fill="none" stroke="#777" stroke-width=".7"/><path d="M208 608h6v-3h-6z M212 604v1" stroke="#777" fill="none" stroke-width=".7"/>
<text x="216" y="608.66" font-size="6" fill="#777">0</text>
<rect x="239.5" y="601" width="9" height="9" fill="#f3f3f3" stroke="#555" stroke-width=".8"/><path d="M241 603.5h6M241 605.5h6M241 607.5h6" stroke="#555" stroke-width=".6"/>
<rect x="254" y="601" width="9" height="8" fill="none" stroke="#888" stroke-width=".8"/><path d="M256 603.5h5M256 605.5h5" stroke="#888" stroke-width=".6"/><path d="M258 609v2" stroke="#888"/>
<text x="268" y="608.02" font-size="7" fill="#999" textLength="35" lengthAdjust="spacingAndGlyphs">メイン モデル</text>
<path d="M385 604l1.5 1.5l1.5-1.5" stroke="#aaa" fill="none" stroke-width=".7"/>
<rect x="512" y="0" width="512" height="612" fill="#2a2a2a"/>
<rect x="512" y="0" width="512" height="12" fill="#ffffff"/>
<rect x="517.5" y="0" width="8" height="7.5" rx="1" fill="#2f6fd8"/><rect x="518.5" y="5.5" width="6" height="1.5" fill="#1a3f8a"/><text x="519.5" y="5" font-size="5" fill="#fff" font-weight="bold">R</text>
<text x="529" y="6.66" font-size="8.5" fill="#9a9a9a" textLength="26" lengthAdjust="spacingAndGlyphs">Dynamo</text>
<path d="M953 3.5h6" stroke="#aaa" stroke-width="1"/><rect x="980.5" y="-1" width="7" height="7" fill="none" stroke="#aaa" stroke-width="1"/><path d="M1008 -1l7 7M1015 -1l-7 7" stroke="#aaa" stroke-width="1"/>
<rect x="512" y="12" width="512" height="47" fill="#353535"/>
<text x="523.8" y="27.74" font-size="9" fill="#dcdcdc" textLength="44.6" lengthAdjust="spacingAndGlyphs">Dynamo(D)</text>
<path d="M574.5 22.5h5l-2.5 3z" fill="#e8e8e8"/>
<text x="601" y="27.74" font-size="9" fill="#dcdcdc" textLength="35.5" lengthAdjust="spacingAndGlyphs">ファイル(F)</text>
<path d="M642.5 22.5h5l-2.5 3z" fill="#e8e8e8"/>
<text x="668" y="27.74" font-size="9" fill="#dcdcdc" textLength="26" lengthAdjust="spacingAndGlyphs">編集(E)</text>
<path d="M703.5 22.5h5l-2.5 3z" fill="#e8e8e8"/>
<text x="729.5" y="27.74" font-size="9" fill="#dcdcdc" textLength="30.0" lengthAdjust="spacingAndGlyphs">表示(V)</text>
<path d="M765.0 22.5h5l-2.5 3z" fill="#e8e8e8"/>
<text x="791.75" y="27.74" font-size="9" fill="#dcdcdc" textLength="43.25" lengthAdjust="spacingAndGlyphs">パッケージ(P)</text>
<path d="M840.5 22.5h5l-2.5 3z" fill="#e8e8e8"/>
<text x="867.5" y="27.74" font-size="9" fill="#dcdcdc" textLength="75.5" lengthAdjust="spacingAndGlyphs">ジェネレーティブ デザイン</text>
<path d="M949.0 22.5h5l-2.5 3z" fill="#e8e8e8"/>
<text x="975.5" y="27.74" font-size="9" fill="#dcdcdc" textLength="33.5" lengthAdjust="spacingAndGlyphs">ヘルプ(H)</text>
<path d="M1014.5 22.5h5l-2.5 3z" fill="#e8e8e8"/>
<g fill="#9a9a9a">
<path d="M522 42h5l3 3v7h-8z"/>
<path d="M546 44h3l1 1h5v1.5h-7.5l-1.5 5z M547.5 47h9l-2 5h-8.5z"/>
<path d="M572 42h8.5v10h-8.5z" /><rect x="574" y="42.5" width="4.5" height="3" fill="#353535"/><rect x="574" y="48" width="4.5" height="3.5" fill="#353535"/>
<path d="M597 47l4-3.5v2c3 0 5 1 5.5 4.5c-1.5-2-3-2-5.5-2v2z"/>
</g>
<path d="M630.5 47l-4-3.5v2c-3 0-5 1-5.5 4.5c1.5-2 3-2 5.5-2v2z" fill="#5c5c5c"/>
<rect x="692" y="34.8" width="136" height="21.5" fill="#262626"/>
<circle cx="702.5" cy="46" r="2.8" fill="#f5a31a"/>
<text x="708" y="49.4" font-size="10" fill="#ececec" textLength="38.5" lengthAdjust="spacingAndGlyphs">Home.dy</text>
<rect x="692" y="56" width="136" height="2.7" fill="#86d9cf"/>
<rect x="748" y="36.8" width="276" height="19.3" fill="#353535"/>
<rect x="748" y="56" width="80" height="0.8" fill="#2a2a2a"/>
<circle cx="769.8" cy="47.8" r="5" fill="#c9c9c9"/><circle cx="769.8" cy="46" r="1.8" fill="#444"/><path d="M766.5 51.5c0-2.3 1.5-3 3.3-3s3.3 .7 3.3 3z" fill="#444"/>
<text x="780.7" y="50.72" font-size="9.5" fill="#dedede" textLength="58.3" lengthAdjust="spacingAndGlyphs">shoya.akiyama</text>
<path d="M855 46h5l-2.5 3z" fill="#e8e8e8"/>
<rect x="881" y="43" width="9" height="9" fill="#777"/><rect x="882.5" y="44.5" width="6" height="6" fill="#555"/><path d="M883 50l2.5-2.5l1.5 1.5l1.5-2v3z" fill="#999"/><rect x="883" y="45" width="2" height="2" fill="#999"/>
<text x="896" y="50.54" font-size="9" fill="#dedede" textLength="72" lengthAdjust="spacingAndGlyphs">イメージとして書き出し</text>
<path d="M973.5 46h5l-2.5 3z" fill="#e8e8e8"/>
<path d="M997.5 47.5c1-1 1-2 1-4c0-2 1.5-3.5 3-3.5s3 1.5 3 3.5c0 2 0 3 1 4z" fill="none" stroke="#ddd" stroke-width=".9"/><path d="M1000.5 48.5a1 1 0 0 0 2 0" stroke="#ddd" fill="none" stroke-width=".8"/>
<rect x="1004" y="49" width="9" height="8" fill="#2d9ee0"/>
<text x="1006.8" y="54.98" font-size="5.5" fill="#fff">1</text>
<rect x="512" y="58.7" width="175" height="525.5" fill="#2a2a2a"/>
<text x="523.3" y="78.82" font-size="12" fill="#e4e4e4" textLength="32.7" lengthAdjust="spacingAndGlyphs">Library</text>
<circle cx="526.8" cy="97" r="3" fill="none" stroke="#ddd" stroke-width="1"/><path d="M529 99.3l2.5 2.5" stroke="#ddd" stroke-width="1.1"/>
<text x="537" y="101.0" font-size="7.5" fill="#d8d8d8" textLength="23.5" lengthAdjust="spacingAndGlyphs">Search</text>
<rect x="523" y="108" width="157" height="1.3" fill="#e6e6e6"/>
<path d="M524.5 133l4-4M526 128.5h3v3" stroke="#5fd0c2" fill="none" stroke-width="1.2"/>
<text x="534" y="132.7" font-size="7.5" fill="#c9dfdb" textLength="12" lengthAdjust="spacingAndGlyphs">List</text>
<rect x="512" y="142" width="175" height="0.8" fill="#3a3a3a"/>
<path d="M525 156.3l3 3l-3 3" stroke="#5fd0c2" fill="none" stroke-width="1.3"/>
<text x="534" y="162.0" font-size="7.5" fill="#c9dfdb" textLength="17.4" lengthAdjust="spacingAndGlyphs">Math</text>
<rect x="512" y="172.2" width="175" height="0.8" fill="#3a3a3a"/>
<path d="M525 186l3 3l-3 3" stroke="#5fd0c2" fill="none" stroke-width="1.3"/>
<text x="534" y="191.7" font-size="7.5" fill="#c9dfdb" textLength="17" lengthAdjust="spacingAndGlyphs">Revit</text>
<rect x="512" y="202.2" width="175" height="0.8" fill="#3a3a3a"/>
<path d="M525 216l3 3l-3 3" stroke="#5fd0c2" fill="none" stroke-width="1.3"/>
<text x="534" y="221.7" font-size="7.5" fill="#c9dfdb" textLength="19" lengthAdjust="spacingAndGlyphs">Script</text>
<rect x="512" y="232.2" width="175" height="0.8" fill="#3a3a3a"/>
<path d="M525 246l3 3l-3 3" stroke="#5fd0c2" fill="none" stroke-width="1.3"/>
<text x="534" y="251.7" font-size="7.5" fill="#c9dfdb" textLength="19" lengthAdjust="spacingAndGlyphs">String</text>
<rect x="512" y="262" width="175" height="0.8" fill="#3a3a3a"/>
<path d="M525 276.6l3 3l-3 3" stroke="#5fd0c2" fill="none" stroke-width="1.3"/>
<text x="534" y="282.3" font-size="7.5" fill="#c9dfdb" textLength="16" lengthAdjust="spacingAndGlyphs">Units</text>
<rect x="512" y="293.5" width="175" height="0.8" fill="#3a3a3a"/>
<text x="523" y="321.96" font-size="11" fill="#e4e4e4" textLength="40" lengthAdjust="spacingAndGlyphs">Add-ons</text>
<path d="M671 317.5h10M676 312.5v10" stroke="#3f8e98" stroke-width="1.1"/>
<path d="M525 342.8l3 3l-3 3" stroke="#5fd0c2" fill="none" stroke-width="1.3"/>
<text x="534" y="348.5" font-size="7.5" fill="#c9dfdb" textLength="53.5" lengthAdjust="spacingAndGlyphs">DividePartNode</text>
<rect x="512" y="359.4" width="175" height="0.8" fill="#3a3a3a"/>
<path d="M525 372.7l3 3l-3 3" stroke="#5fd0c2" fill="none" stroke-width="1.3"/>
<text x="534" y="378.4" font-size="7.5" fill="#c9dfdb" textLength="60.5" lengthAdjust="spacingAndGlyphs">GenerativeDesign</text>
<rect x="512" y="389.4" width="175" height="0.8" fill="#3a3a3a"/>
<path d="M524 404.0l3 3l3-3" stroke="#5fd0c2" fill="none" stroke-width="1.3"/>
<text x="534" y="409.2" font-size="7.5" fill="#c9dfdb" textLength="46" lengthAdjust="spacingAndGlyphs">getparameter</text>
<path d="M527 418V428H542.5" stroke="#d8d8d8" fill="none" stroke-width="1"/>
<path d="M546.5 426.5l3 3l3-3" stroke="#e0e0e0" fill="none" stroke-width="1.3"/>
<text x="560.6" y="432.0" font-size="7.5" fill="#d8d8d8" textLength="60.2" lengthAdjust="spacingAndGlyphs">RevitModification</text>
<path d="M541.5 437V446H557" stroke="#d8d8d8" fill="none" stroke-width="1"/>
<path d="M561 444.5l3 3l3-3" stroke="#e0e0e0" fill="none" stroke-width="1.3"/>
<text x="575" y="450.0" font-size="7.5" fill="#d8d8d8" textLength="29" lengthAdjust="spacingAndGlyphs">WallUtils</text>
<path d="M557.5 464l-1.5 3h2l-1 3" stroke="#f0b030" fill="none" stroke-width=".9"/>
<rect x="565" y="462" width="1.6" height="19" fill="#f0b030"/>
<path d="M578 467l5-1.5l5 1.5v9l-5 1.5l-5-1.5z" fill="#3a7be0"/><path d="M578 467l5-1.5v12l-5-1.5z" fill="#d23a3a"/><rect x="582" y="470" width="3" height="5" fill="#46b04a"/>
<text x="594" y="476.0" font-size="7.5" fill="#d0d0d0" textLength="62" lengthAdjust="spacingAndGlyphs">SetTopLevelOffset</text>
<path d="M541.5 487V496H557" stroke="#d8d8d8" fill="none" stroke-width="1"/>
<path d="M562.5 494.5l3 3l-3 3" stroke="#e0e0e0" fill="none" stroke-width="1.3"/>

<text x="575" y="500.7" font-size="7.5" fill="#d8d8d8" textLength="43.5" lengthAdjust="spacingAndGlyphs">WindowUtils</text>
<path d="M527 505V514H542.5" stroke="#d8d8d8" fill="none" stroke-width="1"/>
<path d="M548 512.5l3 3l-3 3" stroke="#e0e0e0" fill="none" stroke-width="1.3"/>
<text x="560.6" y="519.0" font-size="7.5" fill="#d8d8d8" textLength="80.4" lengthAdjust="spacingAndGlyphs">RevitProjectParameters</text>
<rect x="512" y="523.5" width="175" height="0.8" fill="#3a3a3a"/>
<path d="M525 537.8l3 3l-3 3" stroke="#5fd0c2" fill="none" stroke-width="1.3"/>
<text x="534" y="543.5" font-size="7.5" fill="#c9dfdb" textLength="43.5" lengthAdjust="spacingAndGlyphs">SteamNodes</text>
<rect x="512" y="554" width="175" height="0.8" fill="#3a3a3a"/>
<path d="M525 568l3 3l-3 3" stroke="#5fd0c2" fill="none" stroke-width="1.3"/>
<text x="534" y="573.7" font-size="7.5" fill="#c9dfdb" textLength="59.5" lengthAdjust="spacingAndGlyphs">Structural Design</text>
<rect x="690.2" y="58.7" width="2" height="525.5" fill="#303030"/>
<rect x="686.8" y="127" width="3.4" height="457" fill="#393939"/>
<rect x="686.8" y="248" width="3.4" height="336" fill="#575757"/>
<rect x="692" y="58.7" width="332" height="525.5" fill="#f8f8f8"/>
<rect x="692" y="58.7" width="1.5" height="525.5" fill="#ffffff"/>
<defs><clipPath id="cv"><rect x="693" y="58.7" width="331" height="525.5"/></clipPath></defs>
<g clip-path="url(#cv)">
<path d="M-624.26 1297.61L607.18 347.03M-554.06 1277.37L612.43 346.78M-486.47 1257.88L617.66 346.52M-421.34 1239.1L622.87 346.27M-297.94 1203.51L633.22 345.77M-239.44 1186.64L638.37 345.52M-182.93 1170.34L643.49 345.27M-128.3 1154.59L648.59 345.02M-24.34 1124.61L658.73 344.53M25.17 1110.33L663.76 344.29M73.12 1096.51L668.78 344.04M119.59 1083.1L673.77 343.8M208.38 1057.5L683.7 343.32M250.81 1045.26L688.64 343.08M292.01 1033.38L693.55 342.84M332.03 1021.84L698.45 342.6M408.73 999.72L708.17 342.13M445.5 989.12L713.01 341.9M481.28 978.8L717.82 341.66M516.1 968.76L722.62 341.43M583.03 949.46L732.15 340.97M615.2 940.18L736.89 340.74M646.56 931.14L741.61 340.51M677.14 922.32L746.31 340.28M736.05 905.33L755.65 339.83M764.44 897.14L760.29 339.6M792.15 889.15L764.92 339.38M819.21 881.35L769.53 339.15M871.46 866.28L778.69 338.71M896.7 859.0L783.24 338.49M921.36 851.89L787.77 338.27M945.48 844.94L792.29 338.05M992.14 831.48L801.27 337.61M1014.72 824.97L805.74 337.4M1036.82 818.6L810.18 337.18M1058.45 812.36L814.61 336.97M1100.37 800.27L823.42 336.54M1120.69 794.41L827.8 336.33M1140.6 788.67L832.16 336.11M1160.11 783.04L836.5 335.9M1197.98 772.12L845.14 335.48M1216.36 766.82L849.44 335.28M1234.39 761.62L853.72 335.07M1252.07 756.52L857.98 334.86M1286.45 746.61L866.46 334.45M1303.16 741.79L870.67 334.25M1319.57 737.06L874.87 334.04M1335.67 732.41L879.05 333.84M1367.02 723.37L887.37 333.44M1382.28 718.97L891.5 333.23M1397.27 714.65L895.62 333.03M1412.0 710.4L899.72 332.84M1440.7 702.12L907.89 332.44M1454.69 698.09L911.94 332.24M1468.44 694.12L915.99 332.05M1481.96 690.23L920.02 331.85M1508.34 682.62L928.03 331.46M1521.2 678.91L932.01 331.27M1533.86 675.26L935.98 331.08M1546.32 671.67L939.94 330.88M1570.64 664.65L947.8 330.5M1582.52 661.23L951.71 330.31M1594.21 657.85L955.61 330.12M1605.73 654.53L959.49 329.94M1628.23 648.05L967.22 329.56M1639.22 644.87L971.06 329.37M1650.06 641.75L974.88 329.19M1660.73 638.67L978.7 329.0M1681.6 632.65L986.28 328.64M1691.81 629.71L990.05 328.45M1701.88 626.81L993.81 328.27M1711.8 623.95L997.56 328.09M1731.22 618.34L1005.01 327.73M1740.72 615.6L1008.71 327.55M1750.1 612.9L1012.41 327.37M1759.34 610.23L1016.09 327.19M1777.46 605.01L1023.4 326.83M1786.33 602.45L1027.05 326.66M1795.08 599.93L1030.67 326.48M1803.72 597.44L1034.29 326.31M-631.67 1269.65L1795.77 589.26M-516.82 1183.78L1764.33 578.35M-335.95 1048.54L1706.84 558.39M-263.47 994.34L1680.5 549.24M-199.99 946.87L1655.58 540.59M-143.92 904.95L1631.97 532.39M-49.39 834.27L1588.3 517.23M-9.17 804.2L1568.07 510.21M27.23 776.98L1548.8 503.51M60.35 752.22L1530.43 497.14M118.34 708.86L1496.13 485.23M143.87 689.77L1480.1 479.66M167.44 672.14L1464.76 474.34M189.28 655.81L1450.05 469.23M228.45 626.53L1422.41 459.63M246.08 613.34L1409.4 455.12M262.58 601.0L1396.89 450.77M278.06 589.43L1384.85 446.59M306.28 568.33L1362.1 438.69M319.19 558.68L1351.33 434.95M331.38 549.56L1340.94 431.35M342.92 540.94L1330.91 427.86M364.22 525.01L1311.84 421.25M374.07 517.64L1302.78 418.1M383.44 510.63L1294.02 415.06M392.37 503.96L1285.52 412.11M409.02 491.51L1269.33 406.49M416.79 485.7L1261.6 403.8M424.22 480.15L1254.1 401.2M431.33 474.83L1246.82 398.67M444.7 464.83L1232.89 393.83M450.98 460.14L1226.22 391.52M457.01 455.62L1219.73 389.27M462.82 451.29L1213.42 387.08M473.78 443.09L1201.31 382.87M478.96 439.21L1195.5 380.85M483.96 435.47L1189.83 378.88M488.79 431.87L1184.31 376.97M497.95 425.02L1173.68 373.28M502.3 421.77L1168.57 371.5M506.51 418.62L1163.58 369.77M510.58 415.57L1158.71 368.08M518.34 409.77L1149.31 364.81M522.05 407.0L1144.77 363.24M525.64 404.31L1140.34 361.7M529.12 401.71L1136.01 360.2M535.79 396.72L1127.64 357.29M538.98 394.34L1123.59 355.89M542.08 392.02L1119.63 354.51M545.09 389.77L1115.76 353.17M550.88 385.44L1108.26 350.56M553.66 383.36L1104.62 349.3M556.36 381.34L1101.06 348.06M558.99 379.37L1097.57 346.85M564.06 375.58L1090.81 344.5M566.5 373.76L1087.53 343.37M568.88 371.98L1084.31 342.25M571.2 370.24L1081.16 341.15M575.68 366.9L1075.03 339.02M577.84 365.28L1072.05 337.99M579.95 363.71L1069.13 336.98M582.01 362.16L1066.26 335.98M585.99 359.19L1060.68 334.04M587.92 357.75L1057.96 333.1M589.8 356.34L1055.3 332.18M591.64 354.96L1052.68 331.27M595.21 352.29L1047.58 329.49M596.93 351.0L1045.09 328.63M598.63 349.74L1042.65 327.78M600.28 348.5L1040.25 326.95" stroke="#d6e5ef" stroke-width="0.7" fill="none"/>
<path d="M-697.21 1318.65L601.9 347.29M-358.53 1220.99L628.06 346.02M-75.46 1139.35L653.67 344.78M164.66 1070.11L678.75 343.56M370.92 1010.63L703.32 342.37M550.0 958.98L727.39 341.2M706.96 913.72L750.99 340.05M845.64 873.73L774.12 338.93M969.07 838.13L796.79 337.83M1079.63 806.25L819.02 336.75M1179.23 777.53L840.83 335.69M1269.43 751.52L862.23 334.66M1351.49 727.85L883.21 333.64M1426.48 706.23L903.81 332.64M1495.26 686.39L924.03 331.66M1558.58 668.13L943.88 330.69M1617.06 651.26L963.36 329.75M1671.24 635.64L982.5 328.82M1721.58 621.12L1001.29 327.91M1768.46 607.6L1019.75 327.01M1812.24 594.98L1037.89 326.13M-419.49 1111.0L1734.74 568.07M-94.04 867.66L1609.58 524.62M90.6 729.6L1512.89 491.05M209.56 640.65L1435.95 464.33M292.6 578.56L1373.26 442.57M353.84 532.76L1321.21 424.5M400.89 497.59L1277.3 409.25M438.15 469.73L1239.76 396.22M468.4 447.11L1207.29 384.94M493.45 428.38L1178.93 375.1M514.52 412.62L1153.95 366.43M532.5 399.18L1131.78 358.73M548.03 387.57L1111.97 351.85M561.56 377.45L1094.16 345.67M573.47 368.55L1078.06 340.08M584.02 360.66L1063.44 335.0M593.44 353.61L1050.11 330.37M601.9 347.29L1037.89 326.13" stroke="#c8ccce" stroke-width="0.8" fill="none"/>
<path d="M910.32 426.43L840.83 335.69" stroke="#7cc07c" stroke-width="0.9"/>
<path d="M910.32 426.43L1239.76 396.22" stroke="#f28080" stroke-width="0.9"/>
<path d="M910.32 426.43L911.6 388.3" stroke="#8a8af2" stroke-width="1"/>
</g>
<g>
<rect x="957" y="66" width="65" height="15.5" rx="2" fill="#ffffff" stroke="#e2e2e2" stroke-width=".8"/>
<path d="M988.5 66.5v14.5" stroke="#e2e2e2" stroke-width=".8"/>
<circle cx="966" cy="73.5" r="3.5" fill="none" stroke="#999" stroke-width=".8"/><path d="M967 76.5l3.5-6.5l3.5 6.5z" fill="none" stroke="#999" stroke-width=".8"/><rect x="975" y="70.5" width="5.5" height="5.5" fill="none" stroke="#999" stroke-width=".8"/><path d="M975 70.5l1.5-1.5h5.5v5.5l-1.5 1.5" fill="none" stroke="#999" stroke-width=".8"/>
<rect x="994.5" y="68.5" width="6" height="3.5" fill="#a8d4f7" stroke="#3a9ee6" stroke-width=".8"/><rect x="1007.5" y="69.5" width="8" height="5" fill="#a8d4f7" stroke="#3a9ee6" stroke-width=".8"/><rect x="998.5" y="75" width="6" height="3" fill="#a8d4f7" stroke="#3a9ee6" stroke-width=".8"/><path d="M1000.5 70.5h2.5c1.5 0 2 2.5 4.5 2.5M1004.5 76.5c2 0 2-3 3-3" stroke="#3a9ee6" fill="none" stroke-width=".7"/>
</g>
<g>
<rect x="1005.5" y="86.5" width="14" height="42" rx="2" fill="#ffffff" stroke="#e6e6e6" stroke-width=".8"/>
<path d="M1009 91.5v-2h2M1014 89.5h2v2M1016 95.5v2h-2M1011 97.5h-2v-2" stroke="#555" fill="none" stroke-width=".9"/>
<path d="M1009 108h7M1012.5 104.5v7" stroke="#555" stroke-width="1"/>
<path d="M1006 114.5h13" stroke="#eee" stroke-width=".8"/>
<path d="M1009 122h7" stroke="#555" stroke-width="1"/>
<rect x="1005.5" y="133" width="14" height="15" rx="2" fill="#ffffff" stroke="#e6e6e6" stroke-width=".8"/>
<path d="M1012.5 135.5v10M1007.5 140.5h10" stroke="#555" stroke-width="1"/><path d="M1011 137l1.5-1.5l1.5 1.5M1011 144l1.5 1.5l1.5-1.5M1009 139l-1.5 1.5l1.5 1.5M1016 139l1.5 1.5l-1.5 1.5" stroke="#555" fill="none" stroke-width=".8"/>
<rect x="1005.5" y="151" width="14" height="15" rx="2" fill="#ffffff" stroke="#e6e6e6" stroke-width=".8"/>
<path d="M1010 156l3-1.5l3 1.5v4l-3 1.5l-3-1.5z M1010 156l3 1.5l3-1.5 M1013 157.5v4" stroke="#777" fill="none" stroke-width=".8"/><path d="M1008 153v11h10" stroke="#999" fill="none" stroke-width=".6"/>
</g>
<path d="M836 290 C 860 290, 865 293.5, 890 294.5" stroke="#5ab7ea" stroke-width="1.3" fill="none"/>
<path d="M841 359 C 875 356, 860 308, 890 307.5" stroke="#3a3a3a" stroke-width="1.2" fill="none"/>
<rect x="742.5" y="263" width="93" height="54" fill="#5ab7ea" rx="2.5"/>
<rect x="744" y="264.5" width="90" height="51" fill="#353535" rx="1.5"/>
<rect x="744" y="264.5" width="90" height="17.5" fill="#3f3f3f" rx="1.5"/>
<rect x="747.5" y="268" width="3" height="6" fill="none" stroke="#888" stroke-width=".7"/><path d="M752 275l1.5 1.5" stroke="#e03030" stroke-width="1.6"/>
<text x="760.7" y="275.52" font-size="7" fill="#dcdcdc" textLength="63.8" lengthAdjust="spacingAndGlyphs">Select Model Element</text>
<rect x="746" y="285" width="55.5" height="8.5" fill="none" stroke="#6a6a6a" stroke-width="0.8" rx="1"/>
<text x="767" y="291.36" font-size="6" fill="#e8e8e8" textLength="12" lengthAdjust="spacingAndGlyphs">選択</text>
<path d="M834 284 H811 a6 6 0 0 0 0 12 H834" stroke="#6a6a6a" stroke-width=".8" fill="#353535"/>
<text x="811" y="291.98" font-size="5.5" fill="#e0e0e0" textLength="19" lengthAdjust="spacingAndGlyphs">Element</text>
<text x="747" y="301.78" font-size="5.5" fill="#e8e8e8" textLength="37" lengthAdjust="spacingAndGlyphs">Element : 277851</text>
<g fill="#aaa"><circle cx="829.5" cy="308.5" r=".6"/><circle cx="829.5" cy="311" r=".6"/><circle cx="829.5" cy="313.5" r=".6"/></g>
<rect x="890" y="268" width="109.5" height="57" fill="#2f2f2f" rx="2"/>
<rect x="890" y="268" width="109.5" height="18.5" fill="#3c3c3c" rx="2"/>
<rect x="890" y="284" width="109.5" height="2.5" fill="#3c3c3c"/>
<circle cx="898.8" cy="277.2" r="6.2" fill="none" stroke="#dcdcdc" stroke-width=".9"/><rect x="896.5" y="274" width="4.5" height="6.5" rx="1" fill="none" stroke="#dcdcdc" stroke-width=".7"/>
<text x="908" y="280.22" font-size="7" fill="#dcdcdc" textLength="81" lengthAdjust="spacingAndGlyphs">WallUtils.SetTopLevelOffset</text>
<path d="M891 288.8 H962.5 a5.7 5.7 0 0 1 0 11.4 H891z" fill="#333" stroke="#5a5a5a" stroke-width=".8"/>
<rect x="890" y="288.8" width="2" height="11.4" fill="#5ab7ea"/>
<text x="894" y="296.48" font-size="5.5" fill="#e4e4e4" textLength="12" lengthAdjust="spacingAndGlyphs">walls</text>
<text x="963" y="296.48" font-size="5.5" fill="#cfcfcf">&gt;</text>
<path d="M891 302.0 H962.5 a5.7 5.7 0 0 1 0 11.4 H891z" fill="#333" stroke="#5a5a5a" stroke-width=".8"/>
<rect x="890" y="302.0" width="2" height="11.4" fill="#5ab7ea"/>
<text x="894" y="309.68" font-size="5.5" fill="#e4e4e4" textLength="43" lengthAdjust="spacingAndGlyphs">offsetInMillimeters</text>
<text x="963" y="309.68" font-size="5.5" fill="#cfcfcf">&gt;</text>
<path d="M999.5 289 H984 a5.5 5.5 0 0 0 0 11 H999.5" stroke="#5a5a5a" stroke-width=".8" fill="#333"/>
<text x="984.5" y="296.48" font-size="5.5" fill="#e0e0e0" textLength="8.5" lengthAdjust="spacingAndGlyphs">void</text>
<text x="977" y="321.12" font-size="4.5" fill="#cccccc" textLength="10.5" lengthAdjust="spacingAndGlyphs">AUTO</text>
<g fill="#aaa"><circle cx="994" cy="317" r=".6"/><circle cx="994" cy="319.5" r=".6"/><circle cx="994" cy="322" r=".6"/></g>
<rect x="706" y="333" width="135.5" height="44.5" fill="#333333" rx="2"/>
<rect x="706" y="333" width="135.5" height="18" fill="#424242" rx="2"/>
<rect x="706" y="349" width="135.5" height="2" fill="#424242"/>
<path d="M710 342.5h9" stroke="#ddd" stroke-width="1"/><circle cx="715.5" cy="342.5" r="1.6" fill="#d33" stroke="#333" stroke-width=".5"/>
<text x="724" y="344.72" font-size="7" fill="#d0d0d0" textLength="42" lengthAdjust="spacingAndGlyphs">Number Slider</text>
<rect x="710.5" y="355" width="8.5" height="9" rx="1" fill="none" stroke="#4a9ec8" stroke-width=".9"/><path d="M713 358.5h3.5l-1.75 2z" fill="#4a9ec8"/>
<rect x="724" y="354" width="42" height="13" fill="#5c5c5c"/>
<text x="726" y="363.38" font-size="8" fill="#f0f0f0" textLength="19" lengthAdjust="spacingAndGlyphs">2000</text>
<rect x="770" y="359.8" width="55" height="1" fill="#555"/>
<rect x="770" y="359.3" width="12" height="2" fill="#cfcfcf"/>
<rect x="781" y="357" width="2.5" height="6" fill="#e8e8e8"/>
<path d="M841.5 353 H833 a6 6 0 0 0 0 12 H841.5" stroke="#6a6a6a" stroke-width=".8" fill="#333"/>
<text x="832.5" y="361.3" font-size="5" fill="#cfcfcf">&gt;</text>
<g fill="#aaa"><circle cx="836" cy="370" r=".6"/><circle cx="836" cy="372.5" r=".6"/><circle cx="836" cy="375" r=".6"/></g>
<rect x="512" y="584.2" width="512" height="27.8" fill="#3b3b3b"/>
<rect x="515.5" y="587" width="120" height="22" fill="#2b2b2b"/>
<text x="525" y="600.88" font-size="8" fill="#dcdcdc" textLength="16" lengthAdjust="spacingAndGlyphs">手動</text>
<path d="M627 596.5l2.5 2.5l2.5-2.5" stroke="#ddd" fill="none" stroke-width="1.1"/>
<rect x="642" y="587.5" width="60.5" height="21" fill="#25a596" rx="1.5"/>
<text x="663.5" y="601.06" font-size="8.5" fill="#ffffff" textLength="17.0" lengthAdjust="spacingAndGlyphs">実行</text>
<rect x="710.5" y="591" width="68" height="15" fill="#3b3b3b" stroke="#9a9a9a" stroke-width="0.9" rx="2"/>
<text x="714" y="601.02" font-size="7" fill="#e0e0e0" textLength="61" lengthAdjust="spacingAndGlyphs">実行が終了しました。</text>
<path d="M1017 610l5-5M1020 610l2-2" stroke="#666" stroke-width=".8"/>
</svg>
</body></html>
